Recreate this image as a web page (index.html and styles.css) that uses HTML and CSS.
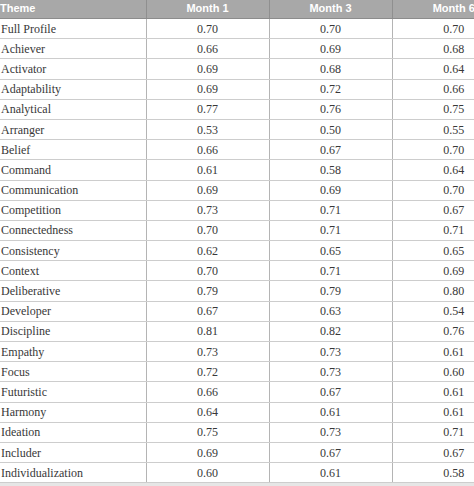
FILE: index.html
```html
<!DOCTYPE html>
<html>
<head>
<meta charset="utf-8">
<link rel="stylesheet" href="styles.css">
</head>
<body>
<div class="frame">
<table class="data">
<colgroup><col class="c-theme"><col class="c-m"><col class="c-m"><col class="c-m"></colgroup>
<thead>
<tr><th class="th-theme">Theme</th><th>Month 1</th><th>Month 3</th><th>Month 6</th></tr>
</thead>
<tbody>
<tr><td>Full Profile</td><td>0.70</td><td>0.70</td><td>0.70</td></tr>
<tr><td>Achiever</td><td>0.66</td><td>0.69</td><td>0.68</td></tr>
<tr><td>Activator</td><td>0.69</td><td>0.68</td><td>0.64</td></tr>
<tr><td>Adaptability</td><td>0.69</td><td>0.72</td><td>0.66</td></tr>
<tr><td>Analytical</td><td>0.77</td><td>0.76</td><td>0.75</td></tr>
<tr><td>Arranger</td><td>0.53</td><td>0.50</td><td>0.55</td></tr>
<tr><td>Belief</td><td>0.66</td><td>0.67</td><td>0.70</td></tr>
<tr><td>Command</td><td>0.61</td><td>0.58</td><td>0.64</td></tr>
<tr><td>Communication</td><td>0.69</td><td>0.69</td><td>0.70</td></tr>
<tr><td>Competition</td><td>0.73</td><td>0.71</td><td>0.67</td></tr>
<tr><td>Connectedness</td><td>0.70</td><td>0.71</td><td>0.71</td></tr>
<tr><td>Consistency</td><td>0.62</td><td>0.65</td><td>0.65</td></tr>
<tr><td>Context</td><td>0.70</td><td>0.71</td><td>0.69</td></tr>
<tr><td>Deliberative</td><td>0.79</td><td>0.79</td><td>0.80</td></tr>
<tr><td>Developer</td><td>0.67</td><td>0.63</td><td>0.54</td></tr>
<tr><td>Discipline</td><td>0.81</td><td>0.82</td><td>0.76</td></tr>
<tr><td>Empathy</td><td>0.73</td><td>0.73</td><td>0.61</td></tr>
<tr><td>Focus</td><td>0.72</td><td>0.73</td><td>0.60</td></tr>
<tr><td>Futuristic</td><td>0.66</td><td>0.67</td><td>0.61</td></tr>
<tr><td>Harmony</td><td>0.64</td><td>0.61</td><td>0.61</td></tr>
<tr><td>Ideation</td><td>0.75</td><td>0.73</td><td>0.71</td></tr>
<tr><td>Includer</td><td>0.69</td><td>0.67</td><td>0.67</td></tr>
<tr><td>Individualization</td><td>0.60</td><td>0.61</td><td>0.58</td></tr>
</tbody>
</table>
<div class="tail"></div>
</div>
</body>
</html>
```
FILE: styles.css
```css
html, body {
  margin: 0;
  padding: 0;
  background: #ffffff;
}
.frame {
  width: 474px;
  height: 486px;
  overflow: hidden;
}
.data {
  border-collapse: collapse;
  table-layout: fixed;
  width: 514px;
}
.c-theme { width: 146px; }
.c-m { width: 123px; }
.data th {
  background: #a8a8a8;
  color: #ffffff;
  font-family: "Liberation Sans", Arial, sans-serif;
  font-weight: bold;
  font-size: 11px;
  height: 16px;
  padding: 0 0 2px 0;
  text-align: center;
  vertical-align: middle;
  border-left: 1px solid #8f8f8f;
  border-bottom: 1px solid #8c8c8c;
  line-height: 12px;
}
.data th.th-theme {
  text-align: left;
  border-left: none;
}
.data td {
  font-family: "Liberation Serif", "Times New Roman", serif;
  font-size: 12px;
  color: #383838;
  height: 19.2px;
  padding: 0;
  line-height: 14px;
  text-align: center;
  border-left: 1px solid #b4b4b4;
  border-bottom: 1px solid #cdcdcd;
}
.data tbody tr {
  height: 20.2px;
}
.data td:first-child {
  text-align: left;
  padding-left: 1px;
  border-left: none;
}
.tail {
  height: 4px;
  background: #e6e6e6;
}
```
